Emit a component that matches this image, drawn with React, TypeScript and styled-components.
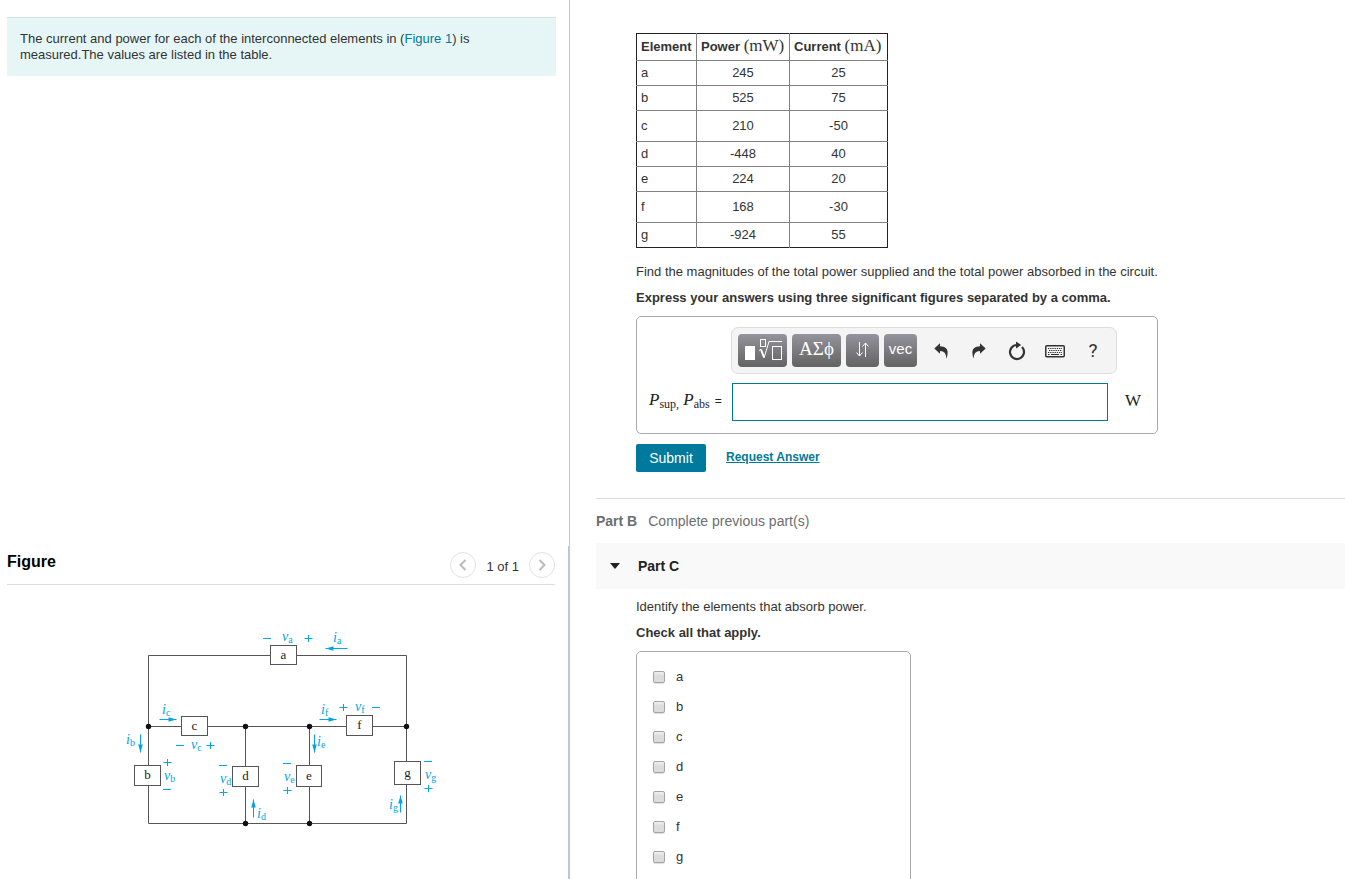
import React from "react";
import styled, { createGlobalStyle, css } from "styled-components";

const GlobalStyle = createGlobalStyle`
  *, *::before, *::after { box-sizing: border-box; }
  body {
    margin: 0;
    background: #fff;
    color: #333;
    font-family: "Liberation Sans", Arial, Helvetica, sans-serif;
    font-size: 13px;
    line-height: 16px;
  }
`;

const serif = `"Liberation Serif", "Times New Roman", serif`;

const Page = styled.div`
  display: grid;
  grid-template-columns: minmax(0, 570fr) minmax(0, 775fr);
  height: 100vh;
  overflow: hidden;
`;

const Side = styled.aside`
  display: grid;
  grid-template-rows: minmax(0, 546fr) minmax(0, 333fr);
  min-height: 0;
`;

const IntroPane = styled.section`
  padding: 17px 13px 0 7px;
  border-right: 1px solid #c0cbd6;
`;

const IntroBox = styled.p`
  margin: 0;
  padding: 13px 80px 13px 13px;
  border-top: 1px solid #d3e2e2;
  background: #e6f6f7;
`;

const FigureLink = styled.a`
  color: #007a9c;
  text-decoration: none;
`;

const FigurePane = styled.section`
  padding: 0 13px 0 7px;
  border-right: 2px solid #b9c8d9;
`;

const FigureHeader = styled.header`
  display: flex;
  align-items: center;
  justify-content: space-between;
  height: 39px;
  border-bottom: 1px solid #ddd;
`;

const FigureTitle = styled.h2`
  margin: 0 0 6px;
  color: #000;
  font-size: 16px;
  line-height: 20px;
`;

const Pager = styled.nav`
  display: flex;
  align-items: center;
  gap: 10px;
`;

const PageCount = styled.span`
  padding-top: 3px;
`;

const RoundButton = styled.button`
  display: grid;
  place-items: center;
  width: 26px;
  height: 26px;
  padding: 0;
  border: 1px solid #e2e2e2;
  border-radius: 50%;
  background: #fff;
`;

const CircuitFrame = styled.div`
  display: flex;
  justify-content: center;
  padding-top: 40px;
`;

const Main = styled.main`
  min-width: 0;
  overflow: hidden;
  padding: 33px 0 0 26px;
`;

const PartBody = styled.section`
  padding-left: 40px;
`;

const ValueTable = styled.table`
  width: 252px;
  table-layout: fixed;
  border-collapse: collapse;
  border: 1px solid #222;
`;

const Row = styled.tr<{ $height: number }>`
  height: ${(p) => p.$height}px;
`;

const cell = css`
  padding: 0 4px;
  white-space: nowrap;
  &:not(:first-child) { border-left: 1px solid #808080; }
`;

const HeadCell = styled.th`
  ${cell}
  text-align: left;
`;

const NameCell = styled.td`
  ${cell}
  border-top: 1px solid #808080;
`;

const ValueCell = styled.td`
  ${cell}
  border-top: 1px solid #808080;
  text-align: center;
`;

const Unit = styled.span`
  font-family: ${serif};
  font-size: 17px;
  font-weight: 400;
  line-height: 0;
`;

const Prompt = styled.p<{ $top: number; $strong?: boolean }>`
  margin: ${(p) => p.$top}px 0 0;
  font-weight: ${(p) => (p.$strong ? 700 : 400)};
`;

const AnswerBox = styled.form`
  display: grid;
  grid-template-columns: 94px minmax(0, 376px) 1fr;
  row-gap: 9px;
  align-items: center;
  max-width: 522px;
  margin-top: 10px;
  padding: 10px 0 12px;
  border: 1px solid #aaa;
  border-radius: 5px;
`;

const Toolbar = styled.div`
  grid-column: 2 / 4;
  justify-self: start;
  display: flex;
  align-items: center;
  gap: 5px;
  height: 47px;
  padding: 0 4px 0 6px;
  border: 1px solid #ddd;
  border-radius: 7px;
  background: #f4f4f4;
`;

const DarkButton = styled.button<{ $wide?: boolean; $serif?: boolean }>`
  display: grid;
  place-items: center;
  width: ${(p) => (p.$wide ? 49 : 33)}px;
  height: 33px;
  padding: 0 0 3px;
  border: 0;
  border-radius: 4px;
  background: linear-gradient(#94939c, #636363);
  color: #fff;
  font-family: ${(p) => (p.$serif ? serif : "inherit")};
  font-size: ${(p) => (p.$serif ? 19 : 15)}px;
  line-height: 20px;
`;

const GlyphGroup = styled.div`
  display: flex;
`;

const GlyphButton = styled.button`
  display: grid;
  place-items: center;
  width: 38px;
  height: 33px;
  padding: 0;
  border: 0;
  background: none;
  color: #333;
  font-family: Roboto, sans-serif;
  font-size: 19px;
`;

const AnswerLabel = styled.label`
  padding: 0 0 3px 12px;
  color: #222;
  font-family: ${serif};
  font-size: 17px;
  line-height: 20px;
  white-space: nowrap;
`;

const Sub = styled.sub`
  font-size: 12px;
  line-height: 0;
  vertical-align: -3px;
`;

const Equals = styled.span`
  padding-left: 5px;
  font-family: "Liberation Sans", Arial, sans-serif;
  font-size: 12px;
`;

const AnswerInput = styled.input`
  width: 100%;
  height: 38px;
  margin-left: 1px;
  padding: 0 8px;
  border: 1px solid #007a9c;
  background: #fff;
  font-size: 16px;
`;

const AnswerUnit = styled.span`
  padding: 0 0 3px 18px;
  color: #222;
  font-family: ${serif};
  font-size: 17px;
`;

const Actions = styled.div`
  display: flex;
  align-items: center;
  gap: 20px;
  margin-top: 10px;
`;

const SubmitButton = styled.button`
  width: 70px;
  height: 28px;
  padding: 0;
  border: 0;
  border-radius: 2px;
  background: #007a9c;
  color: #fff;
  font-family: inherit;
  font-size: 14px;
`;

const RequestLink = styled.a`
  padding-bottom: 2px;
  color: #007a9c;
  font-size: 12px;
  font-weight: 700;
`;

const LockedPart = styled.section`
  display: flex;
  gap: 11px;
  height: 45px;
  margin-top: 26px;
  padding-top: 14px;
  border-top: 1px solid #ddd;
  color: #6d6e70;
  font-size: 14px;
`;

const PartHeader = styled.h3`
  display: flex;
  align-items: center;
  gap: 18px;
  height: 46px;
  margin: 0;
  padding-left: 14px;
  background: #f9f9f9;
  color: #222;
  font-size: 14px;
`;

const ChoiceBox = styled.fieldset`
  width: 275px;
  margin: 10px 0 0;
  padding: 10px 16px 20px;
  border: 1px solid #aaa;
  border-radius: 5px;
`;

const Choice = styled.label`
  display: flex;
  align-items: center;
  gap: 11px;
  height: 30px;
`;

const CheckBox = styled.input`
  appearance: none;
  width: 12px;
  height: 12px;
  margin: 0 0 1px;
  border: 1px solid #a5a5a5;
  border-radius: 2px;
  background: linear-gradient(#efefef, #dcdcdc 40%);
  box-shadow: 0 1px 1px #ddd;
  &:checked { background: #007a9c; }
`;

const rows: [string, string, string, number][] = [
  ["a", "245", "25", 25],
  ["b", "525", "75", 25],
  ["c", "210", "-50", 31],
  ["d", "-448", "40", 25],
  ["e", "224", "20", 25],
  ["f", "168", "-30", 31],
  ["g", "-924", "55", 25],
];

const Blue = "#00a5e3";

const CircuitText = styled.text`
  fill: ${Blue};
  font-family: ${serif};
  font-size: 14px;
  font-style: italic;
`;

const CircuitSub = styled.tspan`
  font-size: 10px;
  font-style: normal;
`;

const BoxName = styled.text`
  fill: #222;
  font-family: ${serif};
  font-size: 13px;
  text-anchor: middle;
`;

const boxes: [string, number, number, number, number][] = [
  ["a", 270, 645, 26, 19],
  ["c", 181, 716, 26, 19],
  ["f", 346, 715, 26, 20],
  ["b", 134, 765, 26, 20],
  ["d", 232, 766, 26, 20],
  ["e", 296, 765, 25, 21],
  ["g", 394, 761, 26, 23],
];

const labels: [string, string, number, number][] = [
  ["v", "a", 282, 641],
  ["i", "a", 333, 642],
  ["i", "c", 162, 714],
  ["i", "f", 321, 714],
  ["v", "f", 355, 711],
  ["i", "b", 126, 744],
  ["v", "c", 191, 749],
  ["i", "e", 317, 746],
  ["v", "b", 164, 780],
  ["v", "d", 220, 783],
  ["v", "e", 284, 781],
  ["v", "g", 425, 779],
  ["i", "d", 257, 818],
  ["i", "g", 389, 809],
];

const minuses = [[267, 638], [376, 707], [180, 745], [167, 789], [223, 765], [287, 763], [428, 761]];
const pluses = [[308, 638], [343, 707], [210, 745], [167, 762], [223, 792], [287, 790], [428, 788]];
const nodes = [[148, 726], [245, 726], [309, 726], [406, 726], [245, 823], [309, 823]];

/* Each arrow: tail point, then tip point. */
const arrows: [number, number, number, number][] = [
  [347, 648, 325, 648],
  [159, 719, 176, 719],
  [319, 719, 336, 719],
  [140, 734, 140, 752],
  [314, 734, 314, 752],
  [253, 817, 253, 799],
  [400, 812, 400, 795],
];

function Arrow({ from }: { from: [number, number, number, number] }) {
  const [x1, y1, x2, y2] = from;
  const angle = (Math.atan2(y2 - y1, x2 - x1) * 180) / Math.PI;
  return (
    <g stroke="none" fill={Blue}>
      <line x1={x1} y1={y1} x2={x2} y2={y2} stroke={Blue} />
      <path d="M0 0L-8 -2.3V2.3Z" transform={`translate(${x2} ${y2}) rotate(${angle})`} />
    </g>
  );
}

function Circuit() {
  return (
    <svg width="330" height="210" viewBox="116 625 330 210" role="img" aria-label="Circuit of seven interconnected elements">
      <path
        d="M148.500 655.500H406.500V823.500H148.500ZM148.500 726.500H406.500M245.500 726.500V823.500M309.500 726.500V823.500"
        fill="none"
        stroke="#555"
      />
      {nodes.map(([x, y]) => (
        <circle key={`${x}-${y}`} cx={x + 0.5} cy={y + 0.5} r="2.7" fill="#111" />
      ))}
      {boxes.map(([name, x, y, w, h]) => (
        <g key={name}>
          <rect x={x + 0.5} y={y + 0.5} width={w} height={h} fill="#fff" stroke="#555" />
          <BoxName x={x + w / 2 + 0.5} y={y + h / 2 + 4}>{name}</BoxName>
        </g>
      ))}
      <g stroke={Blue} fill="none">
        {minuses.map(([x, y]) => (
          <path key={`${x}-${y}`} d={`M${x - 4} ${y + 0.5}h8`} />
        ))}
        {pluses.map(([x, y]) => (
          <path key={`${x}-${y}`} d={`M${x - 3.5} ${y + 0.5}h8M${x + 0.5} ${y - 3}v7`} />
        ))}
      </g>
      {arrows.map((a) => (
        <Arrow key={a.join()} from={[a[0] + 0.5, a[1] + 0.5, a[2] + 0.5, a[3] + 0.5]} />
      ))}
      {labels.map(([sym, sub, x, y]) => (
        <CircuitText key={sym + sub} x={x} y={y}>
          {sym}
          <CircuitSub dy="2">{sub}</CircuitSub>
        </CircuitText>
      ))}
    </svg>
  );
}

function Chevron({ d }: { d: string }) {
  return (
    <svg width="10" height="14" viewBox="0 0 10 14" fill="none" stroke="#bbb" strokeWidth="2">
      <path d={d} />
    </svg>
  );
}

function TemplateIcon() {
  return (
    <svg width="39" height="23" viewBox="0 0 39 23" fill="none" stroke="#fff">
      <rect x="2" y="8" width="10" height="14" fill="#fff" stroke="none" />
      <rect x="17.500" y="1.500" width="5" height="7" />
      <path d="M16 12.500l2 -1" />
      <path d="M18 11.500l3 8" strokeWidth="2" />
      <path d="M21 20L26 3.500H39" />
      <rect x="29.500" y="8.500" width="9" height="13" />
    </svg>
  );
}

function SwapIcon() {
  return (
    <svg width="15" height="17" viewBox="0 0 15 17" fill="none" stroke="#fff">
      <path d="M4.500 1V15M1.500 11.500L4.500 15L7.500 11.500" />
      <path d="M10.500 16V2M7.500 5.500L10.500 2L13.500 5.500" />
    </svg>
  );
}

function CurvedArrow({ flip }: { flip?: boolean }) {
  return (
    <svg width="14" height="16" viewBox="0 0 14 16">
      <path
        d="M0.300 5.500L6 0.300V3.200C11 3.400 13.600 5.500 13.600 9.300C13.600 11.500 13.300 13.500 12.300 15.700C12.300 11 10.500 8.300 6 8.100V10.800Z"
        fill="#333"
        transform={flip ? "matrix(-1 0 0 1 14 0)" : undefined}
      />
    </svg>
  );
}

function ResetIcon() {
  return (
    <svg width="18" height="20" viewBox="0 0 18 20">
      <path d="M14 6.100A7 7 0 1 1 9 4" fill="none" stroke="#333" strokeWidth="2.200" />
      <path d="M8 0.600L13.200 4L8 7.500Z" fill="#333" />
    </svg>
  );
}

function KeyboardIcon() {
  return (
    <svg width="20" height="14" viewBox="0 0 20 14" fill="none" stroke="#333">
      <rect x="0.750" y="1.750" width="18.500" height="11" rx="1" strokeWidth="1.500" />
      <path d="M3 4.500H17M4 6.500H17M3 8.500H17" strokeDasharray="1.300 0.900" />
      <path d="M3 10.500H4.500M6 10.500H14M15.500 10.500H17" />
    </svg>
  );
}

export default function App() {
  return (
    <>
      <GlobalStyle />
      <Page>
        <Side>
          <IntroPane>
            <IntroBox>
              <span>The current and power for each of the interconnected elements in (</span>
              <FigureLink href="#figure">Figure 1</FigureLink>
              <span>) is </span>
              <span>measured.The values are listed in the table.</span>
            </IntroBox>
          </IntroPane>
          <FigurePane id="figure">
            <FigureHeader>
              <FigureTitle>Figure</FigureTitle>
              <Pager aria-label="Figures">
                <RoundButton type="button" aria-label="Previous figure">
                  <Chevron d="M7.500 2L2.500 7L7.500 12" />
                </RoundButton>
                <PageCount>1 of 1</PageCount>
                <RoundButton type="button" aria-label="Next figure">
                  <Chevron d="M2.500 2L7.500 7L2.500 12" />
                </RoundButton>
              </Pager>
            </FigureHeader>
            <CircuitFrame>
              <Circuit />
            </CircuitFrame>
          </FigurePane>
        </Side>

        <Main>
          <PartBody>
            <ValueTable>
              <colgroup>
                <col width="60" />
                <col width="93" />
                <col width="98" />
              </colgroup>
              <thead>
                <Row $height={27}>
                  <HeadCell scope="col">Element</HeadCell>
                  <HeadCell scope="col">Power <Unit>(mW)</Unit></HeadCell>
                  <HeadCell scope="col">Current <Unit>(mA)</Unit></HeadCell>
                </Row>
              </thead>
              <tbody>
                {rows.map(([name, power, current, height]) => (
                  <Row key={name} $height={height}>
                    <NameCell>{name}</NameCell>
                    <ValueCell>{power}</ValueCell>
                    <ValueCell>{current}</ValueCell>
                  </Row>
                ))}
              </tbody>
            </ValueTable>
            <Prompt $top={16}>Find the magnitudes of the total power supplied and the total power absorbed in the circuit.</Prompt>
            <Prompt $top={10} $strong>Express your answers using three significant figures separated by a comma.</Prompt>

            <AnswerBox id="answer" onSubmit={(e: React.FormEvent) => e.preventDefault()}>
              <Toolbar role="toolbar" aria-label="Equation tools">
                <DarkButton type="button" $wide aria-label="Templates"><TemplateIcon /></DarkButton>
                <DarkButton type="button" $wide $serif>ΑΣϕ</DarkButton>
                <DarkButton type="button" aria-label="Subscript and superscript"><SwapIcon /></DarkButton>
                <DarkButton type="button">vec</DarkButton>
                <GlyphGroup>
                  <GlyphButton type="button" aria-label="Undo"><CurvedArrow /></GlyphButton>
                  <GlyphButton type="button" aria-label="Redo"><CurvedArrow flip /></GlyphButton>
                  <GlyphButton type="button" aria-label="Reset"><ResetIcon /></GlyphButton>
                  <GlyphButton type="button" aria-label="Keyboard shortcuts"><KeyboardIcon /></GlyphButton>
                  <GlyphButton type="button">?</GlyphButton>
                </GlyphGroup>
              </Toolbar>
              <AnswerLabel htmlFor="power">
                <i>P</i><Sub>sup</Sub><Sub>,</Sub> <i>P</i><Sub>abs</Sub><Equals>=</Equals>
              </AnswerLabel>
              <AnswerInput id="power" type="text" autoComplete="off" />
              <AnswerUnit>W</AnswerUnit>
            </AnswerBox>

            <Actions>
              <SubmitButton type="submit" form="answer">Submit</SubmitButton>
              <RequestLink href="#request">Request Answer</RequestLink>
            </Actions>
          </PartBody>

          <LockedPart>
            <b>Part B</b>
            <span>Complete previous part(s)</span>
          </LockedPart>

          <PartHeader>
            <svg width="10" height="6" viewBox="0 0 10 6"><path d="M0 0H10L5 6Z" fill="#222" /></svg>
            Part C
          </PartHeader>
          <PartBody>
            <Prompt $top={10}>Identify the elements that absorb power.</Prompt>
            <Prompt $top={10} $strong>Check all that apply.</Prompt>
            <ChoiceBox aria-label="Elements that absorb power">
              {rows.map(([name]) => (
                <Choice key={name}>
                  <CheckBox type="checkbox" name="absorbs" value={name} />
                  {name}
                </Choice>
              ))}
            </ChoiceBox>
          </PartBody>
        </Main>
      </Page>
    </>
  );
}
